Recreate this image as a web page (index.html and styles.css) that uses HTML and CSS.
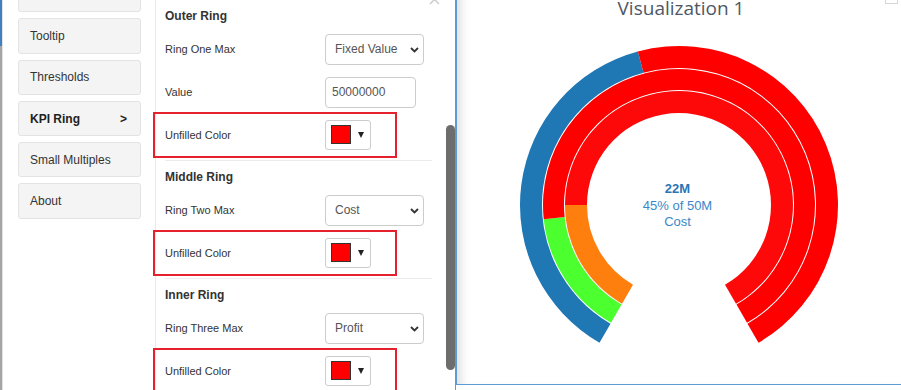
FILE: index.html
```html
<!DOCTYPE html>
<html lang="en">
<head>
    <meta charset="UTF-8">
    <meta name="viewport" content="width=device-width, initial-scale=1.0">
    <title>KPI Ring Settings</title>
    <link rel="stylesheet" href="styles.css">
</head>
<body>
    <div class="app">
        <div class="edge"></div>

        <nav class="nav">
            <div class="nav-btn cut"></div>
            <div class="nav-btn">Tooltip</div>
            <div class="nav-btn">Thresholds</div>
            <div class="nav-btn active">KPI Ring <span class="caret">&gt;</span></div>
            <div class="nav-btn">Small Multiples</div>
            <div class="nav-btn">About</div>
        </nav>

        <section class="settings">
            <svg class="scroll-up" width="11" height="7" viewBox="0 0 11 7">
                <polyline points="1,6 5.5,1.5 10,6" fill="none" stroke="#cfcfcf" stroke-width="1.6"/>
            </svg>

            <div class="group">
                <h3>Outer Ring</h3>
                <div class="row">
                    <label>Ring One Max</label>
                    <div class="select">
                        <select><option>Fixed Value</option></select>
                        <svg class="chev" width="9" height="6" viewBox="0 0 9 6"><polyline points="1,1 4.5,4.5 8,1" fill="none" stroke="#333" stroke-width="1.8"/></svg>
                    </div>
                </div>
                <div class="row">
                    <label>Value</label>
                    <input class="text" type="text" value="50000000">
                </div>
                <div class="row hl">
                    <label>Unfilled Color</label>
                    <button class="color-btn"><span class="swatch"></span><span class="tri"></span></button>
                </div>
            </div>

            <div class="group">
                <h3>Middle Ring</h3>
                <div class="row">
                    <label>Ring Two Max</label>
                    <div class="select">
                        <select><option>Cost</option></select>
                        <svg class="chev" width="9" height="6" viewBox="0 0 9 6"><polyline points="1,1 4.5,4.5 8,1" fill="none" stroke="#333" stroke-width="1.8"/></svg>
                    </div>
                </div>
                <div class="row hl">
                    <label>Unfilled Color</label>
                    <button class="color-btn"><span class="swatch"></span><span class="tri"></span></button>
                </div>
            </div>

            <div class="group">
                <h3>Inner Ring</h3>
                <div class="row">
                    <label>Ring Three Max</label>
                    <div class="select">
                        <select><option>Profit</option></select>
                        <svg class="chev" width="9" height="6" viewBox="0 0 9 6"><polyline points="1,1 4.5,4.5 8,1" fill="none" stroke="#333" stroke-width="1.8"/></svg>
                    </div>
                </div>
                <div class="row hl">
                    <label>Unfilled Color</label>
                    <button class="color-btn"><span class="swatch"></span><span class="tri"></span></button>
                </div>
            </div>
        </section>

        <div class="scrollbar"><div class="thumb"></div></div>

        <main class="viz">
            <div class="frame">
                <h2 class="viz-title">Visualization 1</h2>
                <svg class="chart" width="444" height="364" viewBox="0 0 444 364">
                    <g transform="translate(222,185)">
                        <!-- outer ring: 45% -->
                        <path fill="#1f77b4" d="M -79.5 137.7 A 159 159 0 0 1 -41.15 -153.58 L -35.46 -132.33 A 137 137 0 0 0 -68.5 118.65 Z"/>
                        <path fill="#ff0000" d="M -41.15 -153.58 A 159 159 0 0 1 79.5 137.7 L 68.5 118.65 A 137 137 0 0 0 -35.46 -132.33 Z"/>
                        <!-- middle ring -->
                        <path fill="#4cff2e" d="M -68 117.78 A 136 136 0 0 1 -135.26 14.22 L -114.37 12.02 A 115 115 0 0 0 -57.5 99.59 Z"/>
                        <path fill="#ff0000" d="M -135.26 14.22 A 136 136 0 1 1 68 117.78 L 57.5 99.59 A 115 115 0 1 0 -114.37 12.02 Z"/>
                        <!-- inner ring -->
                        <path fill="#ff7f0e" d="M -57 98.73 A 114 114 0 0 1 -114 0 L -92 0 A 92 92 0 0 0 -46 79.67 Z"/>
                        <path fill="#fd0909" d="M -114 0 A 114 114 0 1 1 57 98.73 L 46 79.67 A 92 92 0 1 0 -92 0 Z"/>

                        <text class="kpi-value" x="-1.5" y="-12">22M</text>
                        <text class="kpi-sub" x="-1.5" y="4.5">45% of 50M</text>
                        <text class="kpi-sub" x="-1.5" y="21">Cost</text>
                    </g>
                </svg>
            </div>
            <span class="corner"></span>
        </main>
    </div>
</body>
</html>
```

FILE: styles.css
```css
body {
    margin: 0;
    width: 901px;
    height: 390px;
    overflow: hidden;
    background: #fff;
    font-family: "Liberation Sans", Arial, sans-serif;
    color: #333;
}
.app {
    display: flex;
    height: 390px;
}
.edge {
    width: 2px;
    border-right: 1px solid #e2e2e2;
    background: linear-gradient(#3f80c0 0 46px, #a5a5a5 46px);
}

/* left menu */
.nav {
    width: 137px;
    padding-left: 15px;
    border-right: 1px solid #ebebeb;
}
.nav-btn {
    display: flex;
    align-items: center;
    height: 35.3px;
    box-sizing: border-box;
    margin-bottom: 6px;
    padding: 0 11px;
    width: 123px;
    background: #f4f4f4;
    border: 1px solid #e3e3e3;
    border-radius: 3px;
    font-size: 12px;
    color: #333;
}
.nav-btn.cut {
    margin-top: -23px;
}
.nav-btn.active {
    font-weight: bold;
    color: #222;
}
.caret {
    margin-left: auto;
    margin-right: 2px;
}

/* settings column */
.settings {
    position: relative;
    width: 289px;
    box-sizing: border-box;
    padding-left: 9px;
}
.scroll-up {
    position: absolute;
    left: 273px;
    top: -2px;
}
.group {
    width: 267px;
    padding: 8px 0 2.5px;
    border-bottom: 1px solid #ececec;
}
.group h3 {
    margin: 0 0 9.5px;
    font-size: 12px;
    line-height: 16px;
    font-weight: bold;
    color: #333;
}
.row {
    display: flex;
    align-items: center;
    height: 31px;
    margin-top: 12px;
}
.group h3 + .row {
    margin-top: 0;
}
.row label {
    width: 160px;
    flex-shrink: 0;
    font-size: 11px;
    color: #333;
}
.row.hl {
    height: 46px;
    width: 244px;
    box-sizing: border-box;
    margin-top: 4px;
    margin-left: -12px;
    padding-left: 10px;
    border: 2px solid #e6212e;
}
.select {
    position: relative;
    width: 99px;
    height: 31px;
}
.select select {
    appearance: none;
    width: 100%;
    height: 100%;
    padding: 0 0 0 9px;
    border: 1px solid #ccc;
    border-radius: 4px;
    background: #fff;
    font-family: inherit;
    font-size: 12px;
    color: #555;
}
.chev {
    position: absolute;
    right: 5px;
    top: 13px;
}
.text {
    width: 91px;
    height: 31px;
    box-sizing: border-box;
    padding: 0 6px;
    border: 1px solid #ccc;
    border-radius: 4px;
    font-family: inherit;
    font-size: 12px;
    color: #555;
}
.color-btn {
    display: flex;
    align-items: center;
    width: 46px;
    height: 30px;
    padding: 0 0 0 5px;
    background: #fff;
    border: 1px solid #ccc;
    border-radius: 3px;
}
.swatch {
    width: 20px;
    height: 19px;
    box-sizing: border-box;
    background: #ff0000;
    border: 1px solid #333;
}
.tri {
    margin-left: 7px;
    border-left: 3.5px solid transparent;
    border-right: 3.5px solid transparent;
    border-top: 6px solid #222;
}

/* scrollbar */
.scrollbar {
    width: 10px;
}
.thumb {
    margin: 125px 0 0 1px;
    width: 9px;
    height: 245px;
    border-radius: 5px;
    background: #6d6d6d;
}

/* visual */
.viz {
    position: relative;
    width: 446px;
    box-sizing: border-box;
    border-left: 1px solid #8e8e8e;
}
.frame {
    height: 389px;
    box-sizing: border-box;
    border-left: 1px solid #5d9bd6;
    border-bottom: 1px solid #5d9bd6;
    box-shadow: inset 10px 0 10px -6px rgba(0, 0, 0, 0.13);
}
.viz-title {
    margin: -4px 0 0;
    height: 24px;
    padding-left: 4px;
    text-align: center;
    font-family: "Open Sans", sans-serif;
    font-size: 19px;
    line-height: 24px;
    font-weight: normal;
    color: #4f5864;
}
.chart {
    display: block;
}
.kpi-value,
.kpi-sub {
    text-anchor: middle;
    font-family: "Liberation Sans", Arial, sans-serif;
    font-size: 13px;
}
.kpi-value {
    font-weight: bold;
    fill: #2a76b5;
}
.kpi-sub {
    fill: #3a88c8;
}
.corner {
    position: absolute;
    left: 429px;
    top: -8px;
    width: 11px;
    height: 10px;
    background: #fff;
    border: 1px solid #d6d6d6;
}
```
